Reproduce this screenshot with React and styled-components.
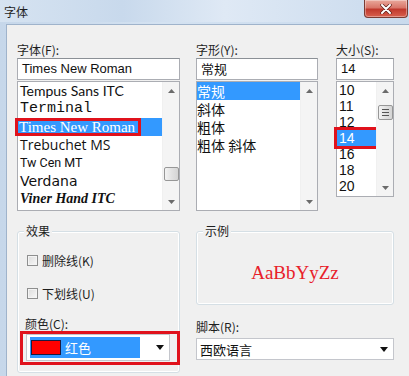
import React from 'react';
import styled, { createGlobalStyle } from 'styled-components';

const GlobalStyle = createGlobalStyle`
  html, body { margin: 0; padding: 0; background: #f0f0f0; }
  body { font-family: "Noto Sans CJK SC", "Noto Sans", sans-serif; }
`;

const Window = styled.div`
  width: 409px;
  height: 376px;
  overflow: hidden;
  display: flex;
  flex-direction: column;
  background: linear-gradient(to right, #c6d7ea, #d4e2f1 40%, #c9daed);
`;

const TitleBar = styled.div`
  height: 22px;
  display: flex;
  align-items: flex-start;
  justify-content: space-between;
  padding-left: 4px;
  background: linear-gradient(to right, #d6e3f1 0%, #c8d9ec 30%, #dfe9f5 55%, #c9daed 100%);
`;

const Title = styled.span`
  font-size: 12px;
  line-height: 24px;
  color: #1e1e1e;
`;

const CloseButton = styled.div`
  width: 42px;
  height: 17px;
  margin-right: 1px;
  display: flex;
  align-items: center;
  justify-content: center;
  border: 1px solid #7a3b33;
  border-top: none;
  border-radius: 0 0 4px 4px;
  background: linear-gradient(to bottom, #e9a99c 0%, #d9776a 45%, #c0392d 55%, #d8604f 100%);
  box-shadow: inset 0 0 0 1px rgba(255, 255, 255, 0.35);
`;

const Frame = styled.div`
  flex: 1;
  display: flex;
  padding: 2px 0 0 6px;
`;

const Client = styled.div`
  flex: 1;
  background: #f0f0f0;
  border-left: 1px solid #9fb3cb;
  border-top: 1px solid #9fb3cb;
  padding: 17px 0 0 10px;
`;

const TopRow = styled.div`
  display: flex;
  align-items: flex-start;
`;

const Column = styled.div`
  width: ${p => p.$width}px;
  margin-left: ${p => p.$left || 0}px;
  display: flex;
  flex-direction: column;
`;

const Label = styled.div`
  font-size: 12px;
  line-height: ${p => p.$line || 16}px;
  color: #1e1e1e;
  white-space: nowrap;
`;

const TextInput = styled.div`
  height: 22px;
  box-sizing: border-box;
  border: 1px solid #abadb3;
  border-top-color: #8b9096;
  background: #fff;
  padding-left: 4px;
  font-family: ${p => p.$cjk ? '"Noto Sans CJK SC", sans-serif' : '"Liberation Sans", "Noto Sans CJK SC", sans-serif'};
  font-size: 13px;
  line-height: 20px;
  color: #111;
`;

const ListBox = styled.div`
  margin-top: 1px;
  height: ${p => p.$height}px;
  box-sizing: border-box;
  border: 1px solid #abadb3;
  background: #fff;
  display: flex;
`;

const Items = styled.div`
  flex: 1;
  display: flex;
  flex-direction: column;
`;

const Item = styled.div`
  height: ${p => p.$h || 18}px;
  line-height: ${p => p.$h || 18}px;
  display: flex;
  align-items: center;
  padding-left: ${p => p.$pad ?? 1}px;
  white-space: nowrap;
  overflow: visible;
  font-family: ${p => p.$font || '"Noto Sans CJK SC", sans-serif'};
  font-size: ${p => p.$size || 14}px;
  font-style: ${p => p.$italic ? 'italic' : 'normal'};
  font-weight: ${p => p.$bold ? 700 : 400};
  color: ${p => p.$selected ? '#fff' : '#111'};
  background: ${p => p.$selected ? '#3399ff' : 'transparent'};
  outline: ${p => p.$marked ? '3px solid #e0121c' : 'none'};
  outline-offset: 0;
`;

const Marked = styled.span`
  display: inline-block;
  height: 12px;
  line-height: 12px;
  padding: 0 3px 0 1px;
  margin-left: -2px;
  outline: 3px solid #e0121c;
`;

const ScrollBar = styled.div`
  width: 16px;
  display: flex;
  flex-direction: column;
  background: #f4f4f4;
  border-left: 1px solid #f0f0f0;
`;

const ArrowBox = styled.div`
  height: 17px;
  display: flex;
  align-items: center;
  justify-content: center;
`;

const Track = styled.div`
  flex: 1;
  display: flex;
  flex-direction: column;
  align-items: center;
`;

const Thumb = styled.div`
  width: 15px;
  height: ${p => p.$height}px;
  margin-top: ${p => p.$offset}px;
  box-sizing: border-box;
  border: 1px solid #979797;
  border-radius: 2px;
  background: linear-gradient(to right, #f3f3f3, #e2e2e2 50%, #d4d4d4);
  display: flex;
  flex-direction: column;
  align-items: center;
  justify-content: center;
  gap: 2px;
`;

const Grip = styled.div`
  width: 7px;
  height: 1px;
  background: #555;
`;

const BottomRow = styled.div`
  display: flex;
  align-items: flex-start;
  margin-top: 20px;
`;

const GroupBox = styled.div`
  position: relative;
  width: ${p => p.$width}px;
  height: ${p => p.$height}px;
  box-sizing: border-box;
  border: 1px solid #d5dfe5;
  border-radius: 3px;
  box-shadow: inset 0 0 0 1px #fff;
  display: flex;
  flex-direction: column;
`;

const Legend = styled.span`
  position: absolute;
  top: -9px;
  left: 6px;
  padding: 0 2px;
  background: #f0f0f0;
  font-size: 12px;
  line-height: 16px;
  color: #1e1e1e;
`;

const CheckRow = styled.label`
  display: flex;
  align-items: center;
  height: 16px;
  margin-top: ${p => p.$top}px;
  padding-left: 9px;
  font-size: 12px;
  color: #1e1e1e;
`;

const CheckBox = styled.span`
  width: 11px;
  height: 11px;
  box-sizing: border-box;
  border: 1px solid #8e8f8f;
  background: linear-gradient(135deg, #dcdcdc, #f8f8f8);
  box-shadow: inset 0 0 0 1px #f4f4f4;
  margin-right: 4px;
`;

const ColorLabel = styled(Label)`
  margin-top: 16px;
  padding-left: 7px;
`;

const ScriptLabel = styled(Label)`
  margin-top: 14px;
`;

const RedFrame = styled.div`
  width: 160px;
  margin-left: 2px;
  box-sizing: border-box;
  border: 3px solid #e0121c;
  padding: 0 7px 1px 3px;
`;

const Combo = styled.div`
  height: ${p => p.$height}px;
  margin-top: ${p => p.$top || 0}px;
  box-sizing: border-box;
  border: 1px solid #c4c6cc;
  background: #fff;
  display: flex;
  align-items: center;
  padding: 0 5px 0 3px;
  font-size: 13px;
  color: #111;
`;

const ComboValue = styled.div`
  flex: 1;
  align-self: stretch;
  display: flex;
  align-items: center;
  margin: ${p => p.$inset ? '2px 16px 2px 0' : '0'};
  background: ${p => p.$highlight ? '#3399ff' : 'transparent'};
  color: ${p => p.$highlight ? '#fff' : '#111'};
  gap: 4px;
  padding-left: ${p => p.$highlight ? 1 : 0}px;
`;

const Swatch = styled.span`
  width: 30px;
  height: 15px;
  box-sizing: border-box;
  border: 1px solid #1a1a40;
  background: #ff0000;
`;

const SampleText = styled.div`
  flex: 1;
  display: flex;
  align-items: center;
  justify-content: center;
  padding-top: 10px;
  font-family: "Liberation Serif", serif;
  font-size: 19px;
  color: #e8202a;
`;

const Arrow = ({ down }) => (
  <svg width="7" height="4" viewBox="0 0 7 4">
    <path d={down ? 'M0 0 H7 L3.5 4 Z' : 'M0 4 H7 L3.5 0 Z'} fill="#6b6b6b" />
  </svg>
);

const ComboArrow = () => (
  <svg width="8" height="5" viewBox="0 0 8 5">
    <path d="M0 0 H8 L4 5 Z" fill="#111" />
  </svg>
);

function Scroll({ thumb, offset, grip }) {
  return (
    <ScrollBar>
      <ArrowBox><Arrow /></ArrowBox>
      <Track>
        {thumb && (
          <Thumb $height={thumb} $offset={offset}>
            {grip && <><Grip /><Grip /><Grip /></>}
          </Thumb>
        )}
      </Track>
      <ArrowBox><Arrow down /></ArrowBox>
    </ScrollBar>
  );
}

const fonts = [
  { name: 'Tempus Sans ITC', font: '"Lato", sans-serif', size: 14 },
  { name: 'Terminal', font: '"Liberation Mono", monospace', size: 15 },
  { name: 'Times New Roman', font: '"Liberation Serif", serif', size: 15, selected: true },
  { name: 'Trebuchet MS', font: '"Open Sans", sans-serif', size: 14 },
  { name: 'Tw Cen MT', font: '"Roboto", sans-serif', size: 12.5 },
  { name: 'Verdana', font: '"DejaVu Sans", sans-serif', size: 14 },
  { name: 'Viner Hand ITC', font: '"Liberation Serif", serif', size: 14, italic: true, bold: true },
];

const styles = ['常规', '斜体', '粗体', '粗体 斜体'];
const sizes = ['10', '11', '12', '14', '16', '18', '20'];

export default function App() {
  return (
    <>
      <GlobalStyle />
      <Window>
        <TitleBar>
          <Title>字体</Title>
          <CloseButton>
            <svg width="12" height="10" viewBox="0 0 12 10">
              <path d="M2 1 L10 9 M10 1 L2 9" stroke="#5a1e18" strokeWidth="3.4" strokeLinecap="round" />
              <path d="M2 1 L10 9 M10 1 L2 9" stroke="#fff" strokeWidth="2" strokeLinecap="round" />
            </svg>
          </CloseButton>
        </TitleBar>
        <Frame>
          <Client>
            <TopRow>
              <Column $width={163}>
                <Label>字体(F):</Label>
                <TextInput>Times New Roman</TextInput>
                <ListBox $height={130}>
                  <Items>
                    {fonts.map(f => (
                      <Item
                        key={f.name}
                        $font={f.font}
                        $size={f.size}
                        $italic={f.italic}
                        $bold={f.bold}
                        $selected={f.selected}
                        $pad={2}
                      >
                        {f.selected ? <Marked>{f.name}</Marked> : f.name}
                      </Item>
                    ))}
                  </Items>
                  <Scroll thumb={14} offset={68} />
                </ListBox>
              </Column>
              <Column $width={122} $left={16}>
                <Label>字形(Y):</Label>
                <TextInput $cjk>常规</TextInput>
                <ListBox $height={130}>
                  <Items>
                    {styles.map((s, i) => (
                      <Item key={s} $selected={i === 0} $pad={0}>{s}</Item>
                    ))}
                  </Items>
                  <Scroll />
                </ListBox>
              </Column>
              <Column $width={58} $left={18}>
                <Label>大小(S):</Label>
                <TextInput>14</TextInput>
                <ListBox $height={116}>
                  <Items>
                    {sizes.map(s => (
                      <Item
                        key={s}
                        $h={16}
                        $pad={2}
                        $font='"Liberation Sans", sans-serif'
                        $size={14}
                        $selected={s === '14'}
                        $marked={s === '14'}
                      >
                        {s}
                      </Item>
                    ))}
                  </Items>
                  <Scroll thumb={15} offset={6} grip />
                </ListBox>
              </Column>
            </TopRow>
            <BottomRow>
              <GroupBox $width={163} $height={142}>
                <Legend>效果</Legend>
                <CheckRow $top={20}><CheckBox />删除线(K)</CheckRow>
                <CheckRow $top={17}><CheckBox />下划线(U)</CheckRow>
                <ColorLabel $line={14}>颜色(C):</ColorLabel>
                <RedFrame>
                  <Combo $height={27}>
                    <ComboValue $highlight $inset>
                      <Swatch />
                      红色
                    </ComboValue>
                    <ComboArrow />
                  </Combo>
                </RedFrame>
              </GroupBox>
              <Column $width={198} $left={16}>
                <GroupBox $width={198} $height={74}>
                  <Legend>示例</Legend>
                  <SampleText>AaBbYyZz</SampleText>
                </GroupBox>
                <ScriptLabel>脚本(R):</ScriptLabel>
                <Combo $height={22} $top={3}>
                  <ComboValue>西欧语言</ComboValue>
                  <ComboArrow />
                </Combo>
              </Column>
            </BottomRow>
          </Client>
        </Frame>
      </Window>
    </>
  );
}
